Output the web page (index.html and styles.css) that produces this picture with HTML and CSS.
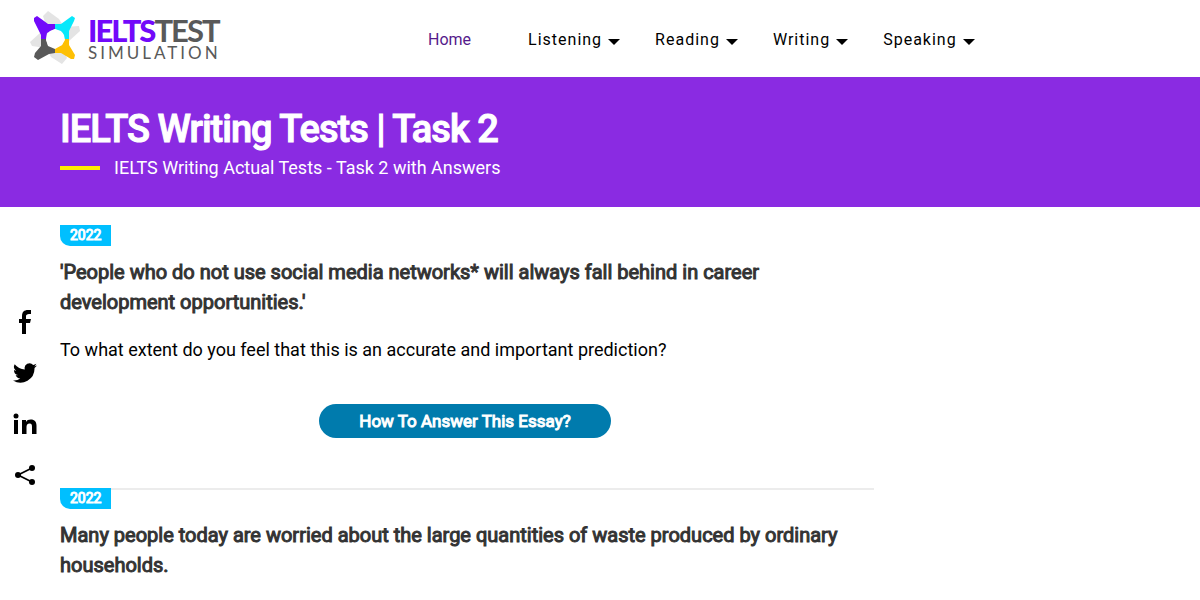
FILE: index.html
```
<!DOCTYPE html>
<html lang="en">
<head>
    <meta charset="UTF-8">
    <meta name="viewport" content="width=device-width, initial-scale=1.0">
    <title>IELTS Writing Tests | Task 2</title>
    <link rel="stylesheet" href="styles.css">
</head>
<body>
    <header class="site-header">
        <a class="logo" href="#" aria-label="IELTS Test Simulation">
            <svg class="logo-mark" viewBox="0 0 50 56" aria-hidden="true">
                <path fill="#e4e4e4" d="M13 5L18 0 29 8 34 16 49 15 50 20 39 30 33 38 37 47 32 53 21 46 16 37 2 35 0 31 10 22 16 14Z"/>
                <path fill="#7209fa" d="M4 7L7 5 14 10 18 13 25 13 25 18 17 22 16 29 11 28 11 24 4 10Z"/>
                <path fill="#06e8fb" d="M25 13L31 13 42 5 45 7 44 10 39 20 39 29 34 28 33 22 25 18Z"/>
                <path fill="#595959" d="M11 28L16 28 18 34 25 37 25 42 19 43 8 49 4 46 5 42 11 35Z"/>
                <path fill="#fec004" d="M34 28L39 28 39 34 45 44 44 48 41 48 31 42 25 42 25 37 32 34Z"/>
                <path fill="#fff" d="M25 18L31 20 34 24 35 29 32 34 25 38 18 35 16 29 17 23 20 20Z"/>
            </svg>
            <span class="logo-text">
                <span class="logo-name"><b>IELTS</b>TEST</span>
                <span class="logo-sub">SIMULATION</span>
            </span>
        </a>
        <nav class="main-nav">
            <a class="home" href="#">Home</a>
            <a class="drop" href="#">Listening</a>
            <a class="drop" href="#">Reading</a>
            <a class="drop" href="#">Writing</a>
            <a class="drop" href="#">Speaking</a>
        </nav>
    </header>

    <section class="banner">
        <h1>IELTS Writing Tests | Task 2</h1>
        <p>IELTS Writing Actual Tests - Task 2 with Answers</p>
    </section>

    <div class="share-bar">
        <a href="#" aria-label="Facebook">
            <svg viewBox="0 0 24 24"><path d="M9 24V13H6V9h3V6c0-4 2-6 6-6h3v4h-2c-2 0-3 1-3 2v3h5l-1 4h-4v11z"/></svg>
        </a>
        <a href="#" aria-label="Twitter">
            <svg viewBox="0 0 24 24"><path d="M24 4.6a10 10 0 0 1-2.8.8 5 5 0 0 0 2.1-2.7 10 10 0 0 1-3.1 1.2 4.9 4.9 0 0 0-8.4 4.5A14 14 0 0 1 1.7 3.2a4.9 4.9 0 0 0 1.5 6.5 5 5 0 0 1-2.2-.6 4.9 4.9 0 0 0 3.9 4.9 5 5 0 0 1-2.2.1 4.9 4.9 0 0 0 4.6 3.4A9.9 9.9 0 0 1 0 19.5 14 14 0 0 0 21.5 7.1 10 10 0 0 0 24 4.600z"/></svg>
        </a>
        <a href="#" aria-label="LinkedIn">
            <svg viewBox="0 0 24 24"><circle cx="3" cy="4" r="2.5"/><path d="M1 8h4v14H1zM9 8h4v2c1-1.6 2.5-2.4 4.700-2.400 4.100 0 5.800 2.400 5.800 6.200V22h-4.500v-7c0-2-.3-3.500-2.300-3.500-2.400 0-3.200 1.600-3.200 3.600V22H9z"/></svg>
        </a>
        <a href="#" aria-label="Share">
            <svg viewBox="0 0 24 24"><path fill="none" stroke="#000" stroke-width="1.7" d="M19 5L5 12l14 7"/><circle cx="5" cy="12" r="3"/><circle cx="19" cy="5" r="3"/><circle cx="19" cy="19" r="3"/></svg>
        </a>
    </div>

    <main class="content">
        <article class="question">
            <span class="year">2022</span>
            <h2>'People who do not use social media networks* will always fall behind in career development opportunities.'</h2>
            <p>To what extent do you feel that this is an accurate and important prediction?</p>
            <button class="answer-btn" type="button">How To Answer This Essay?</button>
        </article>
        <article class="question">
            <span class="year">2022</span>
            <h2>Many people today are worried about the large quantities of waste produced by ordinary households.</h2>
        </article>
    </main>
</body>
</html>
```
FILE: styles.css
```
* {
    box-sizing: border-box;
}

body {
    margin: 0;
    font-family: Roboto, sans-serif;
    color: #000;
    background: #fff;
}

a {
    text-decoration: none;
}

/* Header */
.site-header {
    display: flex;
    align-items: center;
    height: 77px;
    padding-left: 30px;
}

.logo {
    display: flex;
    align-items: center;
    gap: 8px;
    width: 398px;
    color: #595959;
    font-family: Lato, sans-serif;
}

.logo-mark {
    width: 50px;
    height: 56px;
}

.logo-text {
    display: flex;
    flex-direction: column;
}

.logo-name {
    font-size: 31px;
    line-height: 28px;
    font-weight: bold;
    letter-spacing: -2px;
}

.logo-name b {
    color: #7209fa;
}

.logo-sub {
    font-size: 17px;
    line-height: 18px;
    letter-spacing: 3px;
}

.main-nav {
    display: flex;
    align-items: center;
    gap: 35px;
    padding-top: 1px;
    font-size: 16px;
    letter-spacing: 1px;
}

.main-nav a {
    color: #000;
}

.main-nav .home {
    margin-right: 22px;
    color: #551a8b;
    letter-spacing: 0;
}

.drop::after {
    content: "";
    display: inline-block;
    margin-left: 6px;
    border: 6px solid transparent;
    border-top-color: #000;
    border-bottom: 0;
}

/* Purple title band */
.banner {
    height: 130px;
    padding: 28px 60px 0;
    color: #fff;
    background: #8a2be2;
}

.banner h1 {
    margin: 0;
    font-size: 38px;
    font-weight: 500;
    line-height: 48px;
    letter-spacing: -1px;
    -webkit-text-stroke: 1px;
}

.banner p {
    display: flex;
    align-items: center;
    gap: 14px;
    margin: 3px 0 0;
    font-size: 18px;
    line-height: 24px;
}

.banner p::before {
    content: "";
    width: 40px;
    height: 4px;
    background: #ffee00;
}

/* Social links pinned to the left edge */
.share-bar {
    position: fixed;
    top: 310px;
    left: 13px;
    display: flex;
    flex-direction: column;
    gap: 27px;
}

.share-bar svg {
    display: block;
    width: 24px;
    height: 24px;
}

/* Questions */
.content {
    max-width: 874px;
    padding: 18px 0 0 60px;
}

.question {
    display: flex;
    flex-direction: column;
    align-items: flex-start;
    padding-right: 4px;
}

.question + .question {
    margin-top: 50px;
    background: linear-gradient(#ececec, #ececec) no-repeat top / 100% 2px;
}

.year {
    padding: 0 10px;
    border-bottom-left-radius: 10px;
    color: #fff;
    background: #00bfff;
    font-size: 14px;
    line-height: 21px;
    -webkit-text-stroke: 1px;
}

.question h2 {
    margin: 11px 0 0;
    color: #333;
    font-size: 20px;
    font-weight: 400;
    line-height: 30px;
    -webkit-text-stroke: 1px;
}

.question p {
    margin: 18px 0 0;
    font-size: 18px;
    line-height: 30px;
}

.answer-btn {
    align-self: center;
    height: 34px;
    margin-top: 39px;
    padding: 0 40px;
    border: 0;
    border-radius: 17px;
    color: #fff;
    background: #007bad;
    font-family: inherit;
    font-size: 17px;
    -webkit-text-stroke: 1px;
    cursor: pointer;
}
```
